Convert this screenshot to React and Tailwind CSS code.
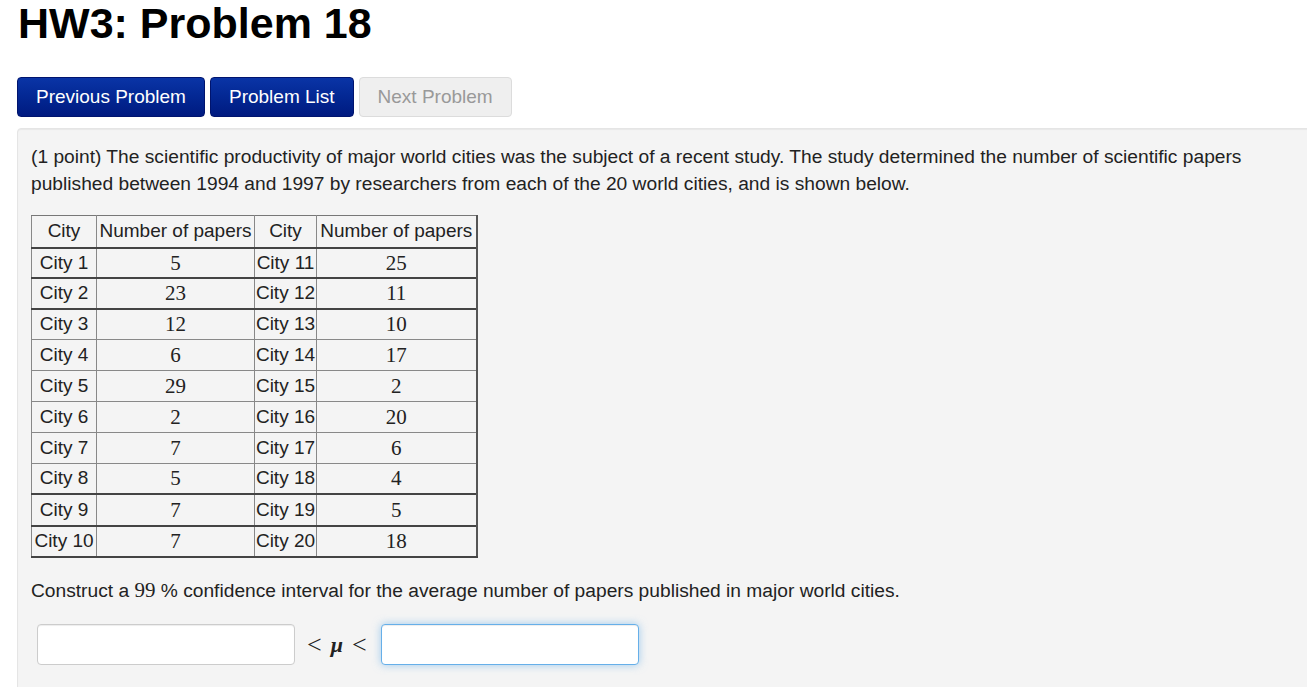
import React from "react";

const rows = [
  ["City 1", "5", "City 11", "25", true],
  ["City 2", "23", "City 12", "11", true],
  ["City 3", "12", "City 13", "10", true],
  ["City 4", "6", "City 14", "17", false],
  ["City 5", "29", "City 15", "2", false],
  ["City 6", "2", "City 16", "20", false],
  ["City 7", "7", "City 17", "6", false],
  ["City 8", "5", "City 18", "4", false],
  ["City 9", "7", "City 19", "5", true],
  ["City 10", "7", "City 20", "18", true],
];

const sans = { fontFamily: '"Liberation Sans", Arial, sans-serif' };
const serif = { fontFamily: '"Liberation Serif", "Times New Roman", serif' };

export default function App() {
  return (
    <div className="h-[687px] bg-white pl-[17px] overflow-hidden text-[#222]" style={sans}>
      <h1 className="text-[43px] leading-[46px] font-bold text-black pt-0 pl-[1px] m-0">HW3: Problem 18</h1>
      <div className="flex gap-[5px] mt-[31px]">
        <button className="h-[40px] px-[18px] rounded-[4px] text-[19px] text-white border border-[#00146e] bg-gradient-to-b from-[#0a34a6] to-[#001a80]">Previous Problem</button>
        <button className="h-[40px] px-[18px] rounded-[4px] text-[19px] text-white border border-[#00146e] bg-gradient-to-b from-[#0a34a6] to-[#001a80]">Problem List</button>
        <button className="h-[40px] px-[18px] rounded-[4px] text-[19px] text-[#999] border border-[#dcdcdc] bg-[#efefef]">Next Problem</button>
      </div>
      <div className="mt-[11px] -mr-[10px] bg-[#f4f4f4] border border-[#e5e5e5] rounded-tl-[4px] pl-[13px] pt-[14px] pb-[22px] shadow-[inset_0_1px_1px_rgba(0,0,0,0.05)]">
        <p className="text-[19.2px] leading-[27px] text-[#222] m-0 pr-[40px]">
          (1 point) The scientific productivity of major world cities was the subject of a recent study. The study determined the number of scientific papers published between 1994 and 1997 by researchers from each of the 20 world cities, and is shown below.
        </p>
        <table className="mt-[18px] border-collapse table-fixed text-[19px]">
          <colgroup>
            <col className="w-[65px]" />
            <col className="w-[158px]" />
            <col className="w-[62px]" />
            <col className="w-[160px]" />
          </colgroup>
          <thead>
            <tr>
              {["City", "Number of papers", "City", "Number of papers"].map((h, i) => (
                <td key={i} className={`h-[32px] p-0 text-center border border-[#888] border-t-[#777] whitespace-nowrap leading-[24px] ${i === 3 ? "border-r-2 border-r-[#555]" : ""}`}>{h}</td>
              ))}
            </tr>
          </thead>
          <tbody>
            {rows.map((r, idx) => (
              <tr key={idx}>
                {[0, 1, 2, 3].map((i) => (
                  <td
                    key={i}
                    className={`p-0 text-center whitespace-nowrap border border-[#888] ${r[4] ? (idx >= 8 ? "h-[31.5px] border-t-2 border-t-[#444]" : "h-[30.5px] border-t-2 border-t-[#444]") : "h-[31px]"} ${idx === rows.length - 1 ? "border-b-2 border-b-[#444]" : ""} ${i === 3 ? "border-r-2 border-r-[#555]" : ""} ${i % 2 === 1 ? "text-[21px] leading-[24px]" : "leading-[24px]"}`}
                    style={i % 2 === 1 ? serif : undefined}
                  >
                    {r[i]}
                  </td>
                ))}
              </tr>
            ))}
          </tbody>
        </table>
        <p className="mt-[19px] text-[19.2px] leading-[27px] m-0">
          Construct a <span className="text-[21px]" style={serif}>99</span> % confidence interval for the average number of papers published in major world cities.
        </p>
        <div className="flex items-center mt-[20px] pl-[6px]">
          <input className="w-[258px] h-[41px] bg-white border border-[#ccc] rounded-[4px] outline-none shadow-[inset_0_1px_1px_rgba(0,0,0,0.075)]" />
          <span className="ml-[12px] mr-[14px] text-[26px] leading-[30px] flex items-center gap-[9px] text-[#222]" style={serif}>
            <span>&lt;</span>
            <span className="italic font-bold text-[22px]">μ</span>
            <span>&lt;</span>
          </span>
          <input className="w-[258px] h-[41px] bg-white border border-[#66afe9] rounded-[4px] outline-none shadow-[inset_0_1px_1px_rgba(0,0,0,0.075),0_0_8px_rgba(102,175,233,0.6)]" />
        </div>
      </div>
    </div>
  );
}
